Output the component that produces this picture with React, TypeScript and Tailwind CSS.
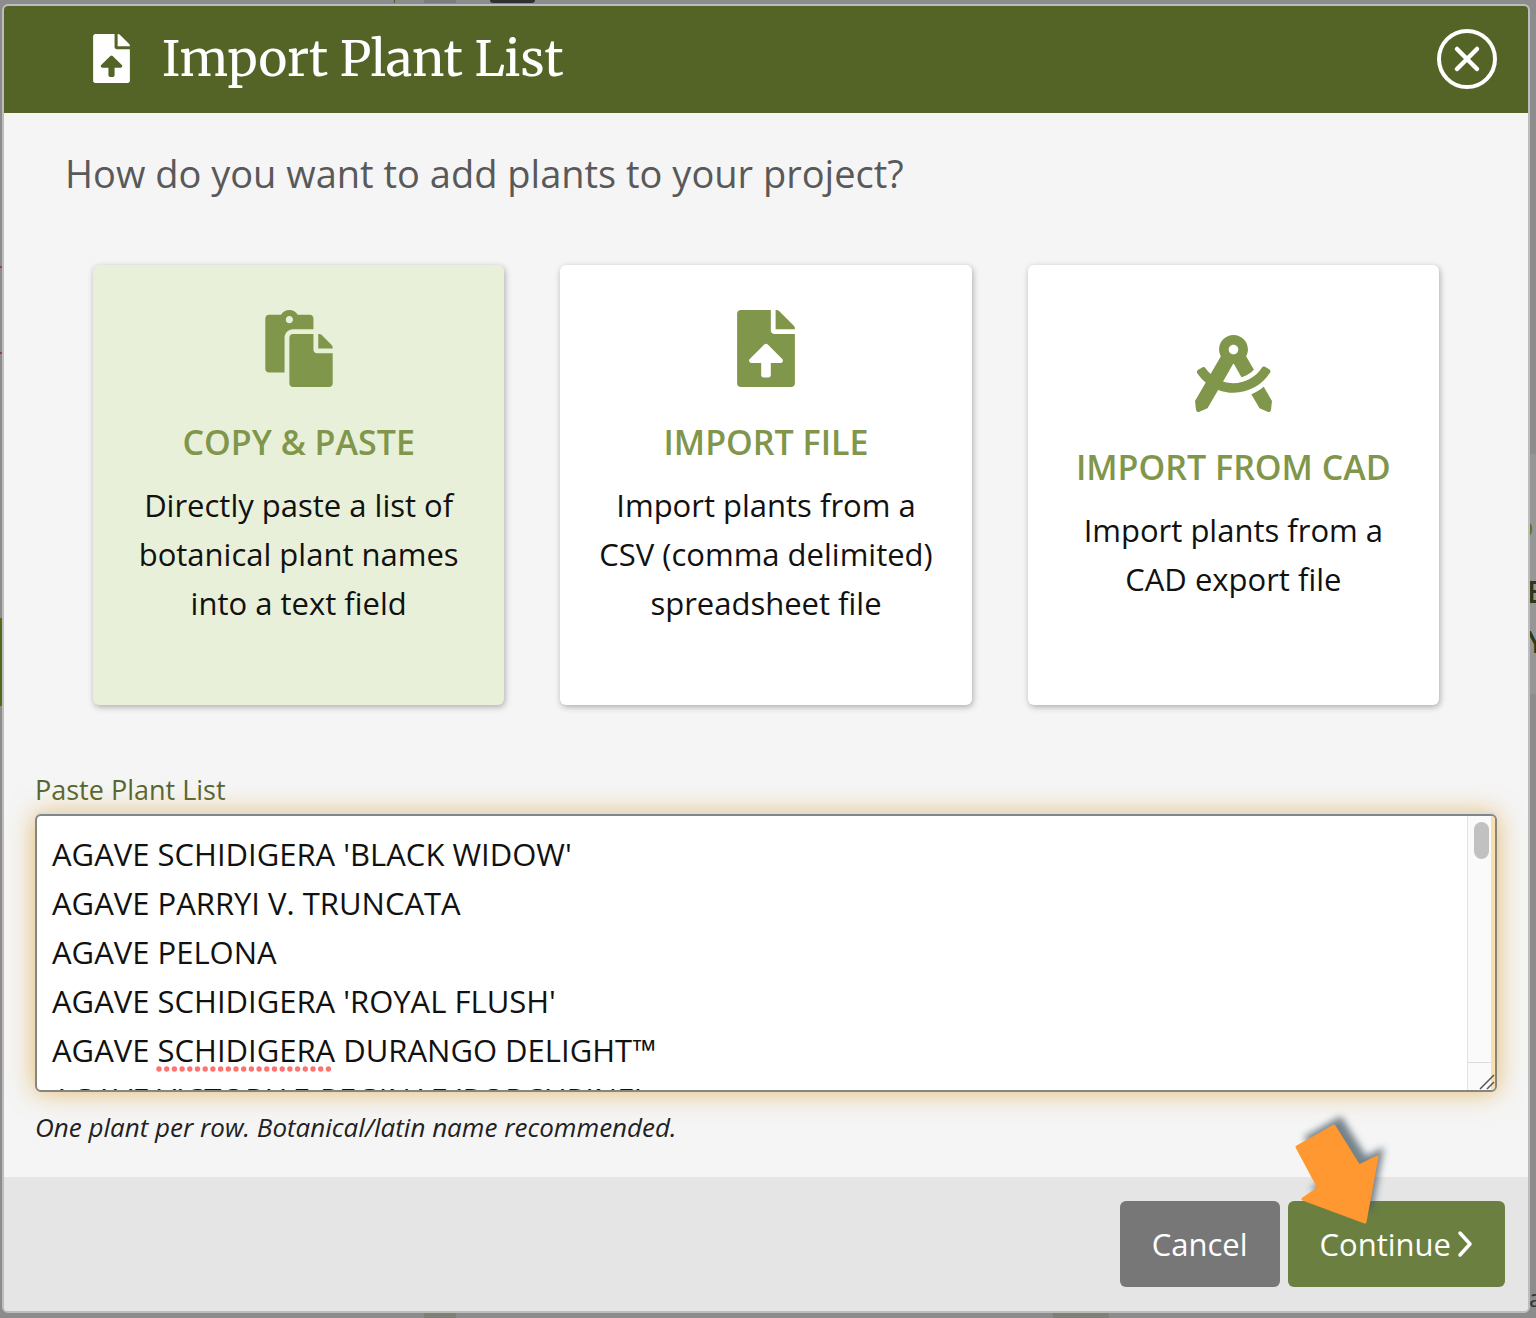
import React, { useState } from "react";
import { FaPaste, FaDraftingCompass } from "react-icons/fa";

const PLANTS = [
  "AGAVE SCHIDIGERA 'BLACK WIDOW'",
  "AGAVE PARRYI V. TRUNCATA",
  "AGAVE PELONA",
  "AGAVE SCHIDIGERA 'ROYAL FLUSH'",
  "AGAVE SCHIDIGERA DURANGO DELIGHT™",
  "AGAVE VICTORIAE-REGINAE 'PORCUPINE'",
].join("\n");

function FileUploadIcon({ className }: { className: string }) {
  return (
    <svg viewBox="0 0 384 512" fill="currentColor" className={className} aria-hidden="true">
      <path
        fillRule="evenodd"
        d="M224 136V0H24C10.700 0 0 10.700 0 24v464c0 13.300 10.700 24 24 24h336c13.300 0 24-10.700 24-24V160H248c-13.200 0-24-10.800-24-24zM289 352H224v80c0 9-7 16-16 16h-32c-9 0-16-7-16-16v-80H95c-14 0-21-17-11-27l96-95c7-7 17-7 24 0l96 95c10 10 3 27-11 27zM377 105L279 7c-5-5-11-7-17-7h-6v128h128v-6c0-6-3-13-7-17z"
      />
    </svg>
  );
}

type Option = { id: string; title: string; text: string; icon: React.ReactNode };

const OPTIONS: Option[] = [
  {
    id: "paste",
    title: "COPY & PASTE",
    text: "Directly paste a list of botanical plant names into a text field",
    icon: <FaPaste className="h-[77px] w-[68px]" />,
  },
  {
    id: "file",
    title: "IMPORT FILE",
    text: "Import plants from a CSV (comma delimited) spreadsheet file",
    icon: <FileUploadIcon className="h-[77px] w-[58px]" />,
  },
  {
    id: "cad",
    title: "IMPORT FROM CAD",
    text: "Import plants from a CAD export file",
    icon: <FaDraftingCompass className="h-[77px] w-[77px]" />,
  },
];

/* Dimmed page that peeks out around the dialog's edges. */
function Backdrop() {
  return (
    <div className="absolute inset-0 flex flex-col overflow-hidden bg-[#8c8c8c] text-[#2c3a17]" aria-hidden="true">
      <div className="flex h-[3px] pl-[394px]">
        <div className="w-px bg-[#4b5b25]" />
        <div className="ml-[29px] w-8 bg-[#7d7d7f]" />
        <div className="ml-[34px] w-[45px] rounded-b bg-[#303033]" />
      </div>
      <div className="flex min-h-0 flex-1 justify-between">
        <div className="w-0.5 pt-[263px]">
          <div className="h-0.5 bg-[#a04038]" />
          <div className="mt-[84px] h-0.5 bg-[#a04038]" />
          <div className="mt-[264px] h-[88px] bg-[#4f6a1c]" />
        </div>
        <div className="w-[7px] pt-[451px]">
          <div className="flex h-60 flex-col items-start bg-[#969696] pt-14 font-semibold">
            <span className="-ml-4 text-[26px] leading-9 text-[#5c701f]">O</span>
            <span className="mt-7 -ml-0.5 text-[30px] leading-9">E</span>
            <span className="mt-3.5 -ml-0.5 text-[30px] leading-9">Y</span>
          </div>
          <div className="mt-[590px] text-[24px] leading-7 text-[#333]">a</div>
        </div>
      </div>
      <div className="flex h-1.5 pl-[424px]">
        <div className="w-8 bg-[#7f8078]" />
        <div className="ml-[597px] w-14 bg-[#7f8078]" />
      </div>
    </div>
  );
}

export default function App() {
  const [selected, setSelected] = useState("paste");
  const [text, setText] = useState(PLANTS);

  return (
    <div className="relative min-h-screen pt-1 pr-1.5 pb-1.5 pl-0.5 font-['Open_Sans','Noto_Sans',sans-serif]">
      <Backdrop />
      <section
        role="dialog"
        aria-labelledby="dialog-title"
        className="relative overflow-hidden rounded-md border-2 border-[#bdbdbd] bg-[#f5f5f5]"
      >
        <header className="flex h-[107px] items-center bg-[#546427] pr-[31px] pb-0.5 pl-[89px] text-white">
          <FileUploadIcon className="h-[49px] w-[37px]" />
          <h1 id="dialog-title" className="ml-8 flex-1 font-['Merriweather',serif] text-[49px] leading-none">
            Import Plant List
          </h1>
          <button type="button" aria-label="Close">
            <svg viewBox="0 0 60 60" className="size-[60px]" fill="none" stroke="currentColor" aria-hidden="true">
              <circle cx="30" cy="30" r="28" strokeWidth="4" />
              <path d="M20 20l20 20M40 20L20 40" strokeWidth="4.500" strokeLinecap="round" />
            </svg>
          </button>
        </header>

        <div className="px-[31px] pt-[30px]">
          <h2 className="px-[30px] text-[38px] leading-[60px] text-[#595959]">
            How do you want to add plants to your project?
          </h2>

          <div className="mt-[62px] grid grid-cols-3 gap-14 px-[58px]">
            {OPTIONS.map((o) => (
              <button
                key={o.id}
                type="button"
                aria-pressed={selected === o.id}
                onClick={() => setSelected(o.id)}
                className={`flex min-h-[440px] flex-col items-center justify-center rounded-md px-9 pb-8 shadow-[1px_2px_6px_rgba(0,0,0,0.3)] ${
                  selected === o.id ? "bg-[#e8f0d9]" : "bg-white"
                }`}
              >
                <span className="text-[#7f964b]">{o.icon}</span>
                <span className="mt-7 text-[34px] leading-[54px] font-semibold whitespace-nowrap text-[#7f964b]">
                  {o.title}
                </span>
                <span className="mt-3 text-[31px] leading-[49px] text-[#111]">{o.text}</span>
              </button>
            ))}
          </div>

          <label htmlFor="plants" className="mt-[65px] block text-[27px] leading-10 text-[#566630]">
            Paste Plant List
          </label>
          <div className="relative mt-1 flex h-[278px] rounded-md border-2 border-[#85867f] bg-white shadow-[0_-2px_0_#dcdddd,0_0_26px_rgba(222,160,50,0.7)]">
            <textarea
              id="plants"
              spellCheck={false}
              value={text}
              onChange={(e) => setText(e.target.value)}
              className="min-w-0 flex-1 resize-none overflow-hidden bg-transparent pt-3.5 pl-[15px] text-[31px] leading-[49px] text-[#111] outline-none"
            />
            <svg
              viewBox="0 0 176 6"
              className="pointer-events-none absolute top-[250px] left-[119px] h-1.5 w-44"
              aria-hidden="true"
            >
              <path d="M3 3H174" stroke="#fb7470" strokeWidth="5.400" strokeLinecap="round" strokeDasharray="0 7.700" />
            </svg>
            <div
              className="flex w-7 flex-col rounded-r border-r-4 border-l border-r-[#f7e0ae] border-l-[#e3e3e3] bg-[#fafafa]"
              aria-hidden="true"
            >
              <div className="flex flex-1 justify-end pt-1.5 pr-0.5">
                <div className="h-[37px] w-[15px] rounded-full bg-[#c1c1c1]" />
              </div>
              <div className="flex h-7 items-end justify-end border-t border-[#dcdcdc]">
                <svg viewBox="0 0 16 16" className="-mr-1 size-4" stroke="#555" strokeWidth="1.500">
                  <path d="M1 15L15 1M8 15l7-7" />
                </svg>
              </div>
            </div>
          </div>
          <p className="mt-3.5 pb-[29px] text-[26px] leading-[42px] text-[#222] italic">
            One plant per row. Botanical/latin name recommended.
          </p>
        </div>

        <footer className="relative flex justify-end gap-2 bg-[#e5e5e5] px-[23px] py-6 text-[31px] text-white">
          <button type="button" className="h-[86px] rounded-md bg-[#777] px-8">
            Cancel
          </button>
          <button type="button" className="flex h-[86px] items-center gap-1.5 rounded-md bg-[#6b8040] px-8">
            Continue
            <svg viewBox="0 0 16 28" className="h-7 w-4" fill="none" stroke="currentColor" strokeWidth="3.500" aria-hidden="true">
              <path d="M3 3l10 11L3 25" strokeLinecap="round" strokeLinejoin="round" />
            </svg>
          </button>
          <svg
            viewBox="0 0 110 130"
            className="pointer-events-none absolute -top-[72px] right-[131px] h-[130px] w-[110px] overflow-visible"
            aria-hidden="true"
          >
            <defs>
              <filter id="arrow-shadow" x="-30%" y="-30%" width="160%" height="160%">
                <feGaussianBlur stdDeviation="3.500" />
              </filter>
            </defs>
            <path
              d="M10 42L47 21L72 61L90 52L78 117L16 94L32 83Z"
              fill="#4a5c66"
              opacity="0.75"
              transform="translate(7 -10)"
              filter="url(#arrow-shadow)"
            />
            <path
              d="M10 42L47 21L72 61L90 52L78 117L16 94L32 83Z"
              fill="#ff9830"
              stroke="#ff9830"
              strokeWidth="3"
              strokeLinejoin="round"
            />
          </svg>
        </footer>
      </section>
    </div>
  );
}
